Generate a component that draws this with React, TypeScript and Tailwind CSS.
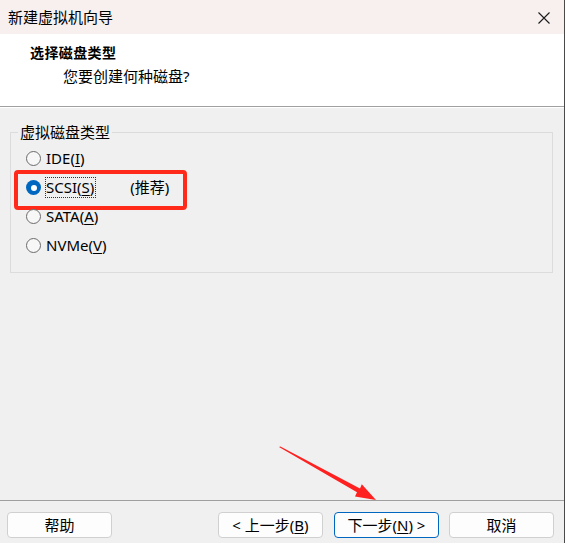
import React from "react";

const font = { fontFamily: '"Noto Sans", "Noto Sans CJK SC", sans-serif' };

const Radio = ({ checked }: { checked?: boolean }) =>
  checked ? (
    <span className="block w-[15px] h-[15px] rounded-full bg-[#0067c0] flex items-center justify-center shrink-0">
      <span className="block w-[6px] h-[6px] rounded-full bg-white" />
    </span>
  ) : (
    <span className="block w-[15px] h-[15px] rounded-full border border-[#6b6b6b] bg-[#f7f7f7] shrink-0" />
  );

const Btn = ({ children, primary }: { children: React.ReactNode; primary?: boolean }) => (
  <button
    className={
      "w-[105px] h-[26px] rounded-[4px] bg-[#fdfdfd] text-[15px] text-black flex items-center justify-center border " +
      (primary ? "border-[#0067c0]" : "border-[#d0d0d0]")
    }
  >
    {children}
  </button>
);

export default function App() {
  const rows = [
    { key: "ide", label: "IDE(", u: "I" },
    { key: "scsi", label: "SCSI(", u: "S", checked: true },
    { key: "sata", label: "SATA(", u: "A" },
    { key: "nvme", label: "NVMe(", u: "V" },
  ];

  return (
    <div className="relative w-[565px] h-[543px] flex flex-col bg-[#f0f0f0] border-r border-[#4a4a4a] text-black overflow-hidden" style={font}>
      {/* title bar */}
      <div className="h-[34px] shrink-0 bg-[#f7f0ef] flex items-center justify-between pl-[8px] pr-[14px]">
        <span className="text-[15px] leading-none">新建虚拟机向导</span>
        <svg width="12" height="12" viewBox="0 0 12 12" className="mt-[1px]">
          <path d="M0.5 0.5 L11.5 11.5 M11.5 0.5 L0.5 11.5" stroke="#1a1a1a" strokeWidth="1.1" />
        </svg>
      </div>

      {/* header */}
      <div className="h-[73px] shrink-0 bg-white border-b border-[#a0a0a0] pt-[9px]">
        <div className="pl-[30px] text-[14px] font-bold leading-[20px] tracking-[0.4px]">选择磁盘类型</div>
        <div className="pl-[63px] mt-[3px] text-[15px] leading-[20px]">您要创建何种磁盘?</div>
      </div>

      {/* body */}
      <div className="flex-1 border-t border-white pt-[14px]">
        <fieldset className="ml-[10px] mr-[11px] border border-[#dcdcdc] pt-[2px] pb-[12px]">
          <legend className="ml-[7px] px-[2px] text-[15px] leading-[20px]">虚拟磁盘类型</legend>
          {rows.map((r) => (
            <div key={r.key} className="relative h-[29px] pl-[15px] flex items-center gap-[5px] text-[15px]">
              <Radio checked={r.checked} />
              {r.checked ? (
                <>
                  <span className="outline-1 outline-dotted outline-[#333] leading-[19px] pr-[1px]">
                    {r.label}
                    <u className="underline-offset-2">{r.u}</u>)
                  </span>
                  <span className="ml-[30px]">(推荐)</span>
                  <span className="absolute left-[3px] top-[-3px] w-[173px] h-[40px] border-[4px] border-[#ff2a1a] rounded-[4px]" />
                </>
              ) : (
                <span>
                  {r.label}
                  <u className="underline-offset-2">{r.u}</u>)
                </span>
              )}
            </div>
          ))}
        </fieldset>
      </div>

      {/* footer */}
      <div className="shrink-0 border-t border-[#a0a0a0] pt-[11px] pb-[5px] pl-[7px] pr-[10px] flex items-center">
        <Btn>帮助</Btn>
        <div className="ml-auto flex gap-[11px]">
          <Btn>
            &lt; 上一步(<u className="underline-offset-2">B</u>)
          </Btn>
          <Btn primary>
            下一步(<u className="underline-offset-2">N</u>) &gt;
          </Btn>
        </div>
        <div className="ml-[10px]">
          <Btn>取消</Btn>
        </div>
      </div>

      {/* annotation arrow */}
      <svg className="absolute left-0 top-0 pointer-events-none" width="565" height="543">
        <polygon points="279,447 280.4,446.6 360,488.6 361.8,484.3 376,500 355,496.5 357,492.2" fill="#ff2020" />
      </svg>
    </div>
  );
}
